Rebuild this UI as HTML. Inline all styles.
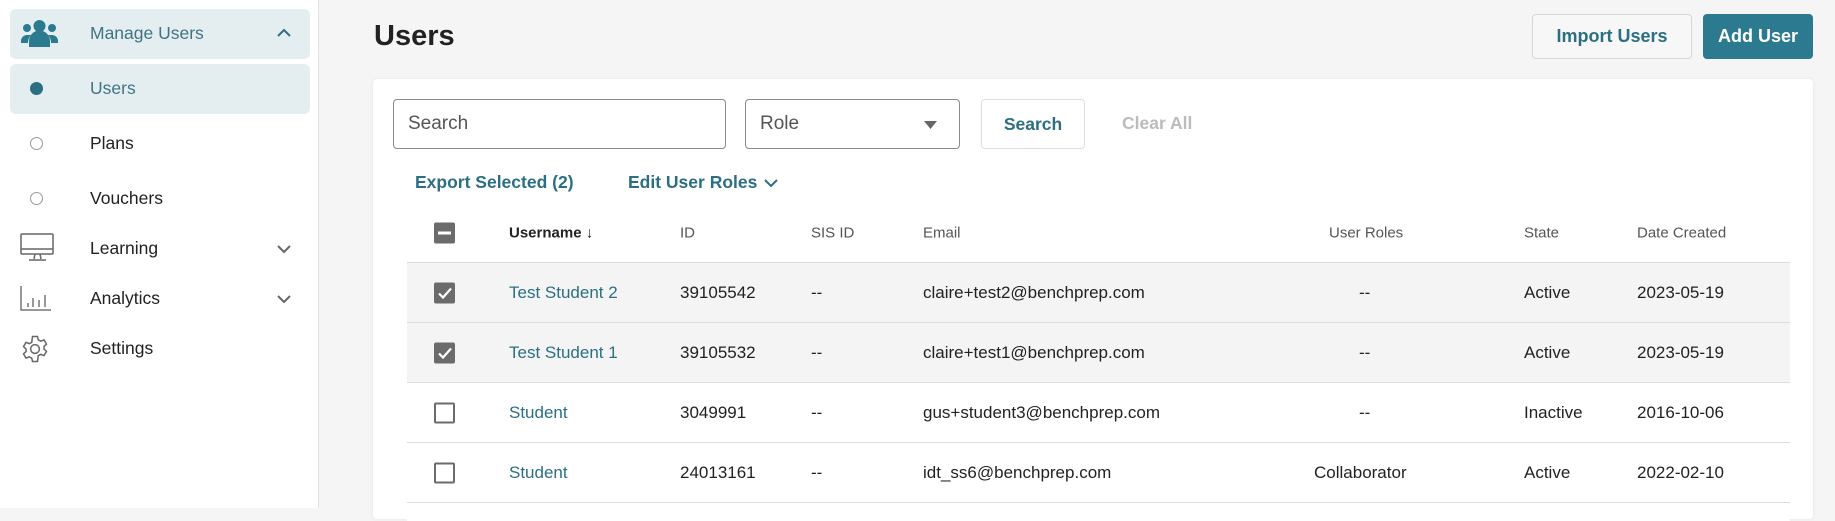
<!DOCTYPE html>
<html><head><meta charset="utf-8"><style>
*{box-sizing:border-box;margin:0;padding:0}
body{width:1835px;height:508px;overflow:hidden;background:#f5f5f5;font-family:"Liberation Sans",sans-serif;color:#222;position:relative}
.sb{position:absolute;left:0;top:0;width:319px;height:508px;background:#fff;border-right:1px solid #e2e2e2}
.hl{position:absolute;left:10px;width:300px;height:50px;background:#e4eef0;border-radius:6px}
.nav{position:absolute;left:90px;font-size:17.5px;color:#222}
.ab{position:absolute}
.main-title{position:absolute;left:374px;top:20px;font-size:29px;font-weight:600;color:#222}
.btn{position:absolute;top:14px;height:45px;border-radius:4px;font-size:18px;font-weight:bold;display:flex;align-items:center;justify-content:center}
.card{position:absolute;left:373px;top:79px;width:1440px;height:440px;background:#fff;border-radius:4px;box-shadow:0 0 3px rgba(0,0,0,.08)}
.in{position:absolute;top:99px;height:50px;border:1px solid #8a8a8a;border-radius:4px;font-size:19px;color:#555;padding-left:14px;display:flex;align-items:center}
.lnk{position:absolute;top:172px;font-size:17.5px;color:#2b6f82;font-weight:600}
.tbl{position:absolute;left:407px;top:201px;width:1383px;height:320px;background:#fff}
.row{position:absolute;left:407px;width:1383px;height:60px;border-bottom:1.5px solid #ddd}
.c{position:absolute;font-size:17px;color:#222;top:50%;transform:translateY(-50%);white-space:nowrap}
.h{font-size:15px;color:#555}
.cb{position:absolute;left:27px;width:21px;height:21px;border-radius:2px;top:50%;transform:translateY(-50%)}
.on{background:#6b6b6b}
.off{border:2px solid #6b6b6b;background:#fff}
.u{color:#2b6f82}
</style></head><body>
<div class="sb">
 <div class="hl" style="top:9px"></div>
 <div class="hl" style="top:64px"></div>
 <svg class="ab" style="left:20px;top:19px" width="39" height="29" viewBox="0 0 39 29"><g fill="#2b7a8f"><circle cx="19.5" cy="7" r="6"/><circle cx="7" cy="9" r="4"/><circle cx="32" cy="9" r="4"/><path d="M9 28v-6a10 10 0 0 1 21 0v6z"/><path d="M1 22a6 6 0 0 1 6-6h4a11 11 0 0 0-3 7v1H1z"/><path d="M38 22a6 6 0 0 0-6-6h-4a11 11 0 0 1 3 7v1h7z"/></g></svg>
 <div class="nav" style="top:23px;color:#3f7484">Manage Users</div>
 <svg class="ab" style="left:276px;top:28px" width="16" height="10"><path d="M2 8l6-6 6 6" stroke="#2b6f82" stroke-width="2" fill="none"/></svg>
 <div class="ab" style="left:30px;top:82px;width:13px;height:13px;border-radius:50%;background:#2b6f82"></div>
 <div class="nav" style="top:78px;color:#3f7484">Users</div>
 <div class="ab" style="left:30px;top:137px;width:13px;height:13px;border-radius:50%;border:1px solid #999"></div>
 <div class="nav" style="top:133px">Plans</div>
 <div class="ab" style="left:30px;top:192px;width:13px;height:13px;border-radius:50%;border:1px solid #999"></div>
 <div class="nav" style="top:188px">Vouchers</div>
 <svg class="ab" style="left:20px;top:233px" width="35" height="32" viewBox="0 0 35 32"><g stroke="#666" stroke-width="1.5" fill="none"><rect x="1" y="1" width="32" height="20" rx="1"/><path d="M1 16h32M15 21l-1 5M20 21l1 5M9 27h17"/></g></svg>
 <div class="nav" style="top:238px">Learning</div>
 <svg class="ab" style="left:276px;top:244px" width="16" height="10"><path d="M2 2l6 6 6-6" stroke="#666" stroke-width="2" fill="none"/></svg>
 <svg class="ab" style="left:20px;top:286px" width="32" height="25" viewBox="0 0 32 25"><g stroke="#777" stroke-width="1.5" fill="none"><path d="M1 0v24h30M8 21v-4M13 21v-9M19 21v-7M25 21v-12"/></g></svg>
 <div class="nav" style="top:288px">Analytics</div>
 <svg class="ab" style="left:276px;top:294px" width="16" height="10"><path d="M2 2l6 6 6-6" stroke="#666" stroke-width="2" fill="none"/></svg>
 <svg class="ab" style="left:20px;top:334px" width="30" height="30" viewBox="0 0 24 24"><g stroke="#666" stroke-width="1.2" fill="none"><circle cx="12" cy="12" r="3.5"/><path d="M10 2h4l.6 2.7 2 1 2.6-1 2 3.4-2 1.9v2l2 1.9-2 3.4-2.6-1-2 1L14 22h-4l-.6-2.7-2-1-2.6 1-2-3.4 2-1.9v-2l-2-1.9 2-3.4 2.6 1 2-1z"/></g></svg>
 <div class="nav" style="top:338px">Settings</div>
</div>
<div class="main-title">Users</div>
<div class="btn" style="left:1532px;width:160px;border:1px solid #d6d6d6;background:#f7f7f7;color:#2b6f82">Import Users</div>
<div class="btn" style="left:1703px;width:110px;background:#2b7a8f;color:#fff">Add User</div>
<div class="card"></div>
<div class="in" style="left:393px;width:333px">Search</div>
<div class="in" style="left:745px;width:215px">Role<svg style="position:absolute;right:22px;top:21px" width="13" height="8"><path d="M0 0h13L6.5 8z" fill="#666"/></svg></div>
<div class="in" style="left:981px;width:104px;border-color:#ddd;color:#2b6f82;font-weight:600;font-size:17.5px;justify-content:center;padding:0">Search</div>
<div class="ab" style="left:1122px;top:113px;font-size:17.5px;color:#bbb;font-weight:600">Clear All</div>
<div class="lnk" style="left:415px">Export Selected (2)</div>
<div class="lnk" style="left:628px">Edit User Roles <svg width="14" height="9" style="margin-left:2px"><path d="M1 1l6 6 6-6" stroke="#2b6f82" stroke-width="2" fill="none"/></svg></div>
<div class="tbl"></div>
<div class="row" style="top:203px">
 <div class="cb on"><div style="position:absolute;left:4px;top:9px;width:13px;height:3px;background:#fff"></div></div>
 <div class="c h" style="left:102px;color:#222;font-weight:600">Username <span style="font-weight:normal">↓</span></div>
 <div class="c h" style="left:273px">ID</div><div class="c h" style="left:404px">SIS ID</div>
 <div class="c h" style="left:516px">Email</div><div class="c h" style="left:922px">User Roles</div>
 <div class="c h" style="left:1117px">State</div><div class="c h" style="left:1230px">Date Created</div>
</div>
<div class="row" style="top:263px;background:#f4f4f4"><div class="cb on"><svg width="21" height="21"><path d="M5 11l4 4 8-9" stroke="#fff" stroke-width="2.2" fill="none"/></svg></div>
 <div class="c u" style="left:102px">Test Student 2</div><div class="c" style="left:273px">39105542</div><div class="c" style="left:404px">--</div><div class="c" style="left:516px">claire+test2@benchprep.com</div><div class="c" style="left:952px">--</div><div class="c" style="left:1117px">Active</div><div class="c" style="left:1230px">2023-05-19</div></div>
<div class="row" style="top:323px;background:#f4f4f4"><div class="cb on"><svg width="21" height="21"><path d="M5 11l4 4 8-9" stroke="#fff" stroke-width="2.2" fill="none"/></svg></div>
 <div class="c u" style="left:102px">Test Student 1</div><div class="c" style="left:273px">39105532</div><div class="c" style="left:404px">--</div><div class="c" style="left:516px">claire+test1@benchprep.com</div><div class="c" style="left:952px">--</div><div class="c" style="left:1117px">Active</div><div class="c" style="left:1230px">2023-05-19</div></div>
<div class="row" style="top:383px"><div class="cb off"></div>
 <div class="c u" style="left:102px">Student</div><div class="c" style="left:273px">3049991</div><div class="c" style="left:404px">--</div><div class="c" style="left:516px">gus+student3@benchprep.com</div><div class="c" style="left:952px">--</div><div class="c" style="left:1117px">Inactive</div><div class="c" style="left:1230px">2016-10-06</div></div>
<div class="row" style="top:443px"><div class="cb off"></div>
 <div class="c u" style="left:102px">Student</div><div class="c" style="left:273px">24013161</div><div class="c" style="left:404px">--</div><div class="c" style="left:516px">idt_ss6@benchprep.com</div><div class="c" style="left:907px">Collaborator</div><div class="c" style="left:1117px">Active</div><div class="c" style="left:1230px">2022-02-10</div></div>
</body></html>
